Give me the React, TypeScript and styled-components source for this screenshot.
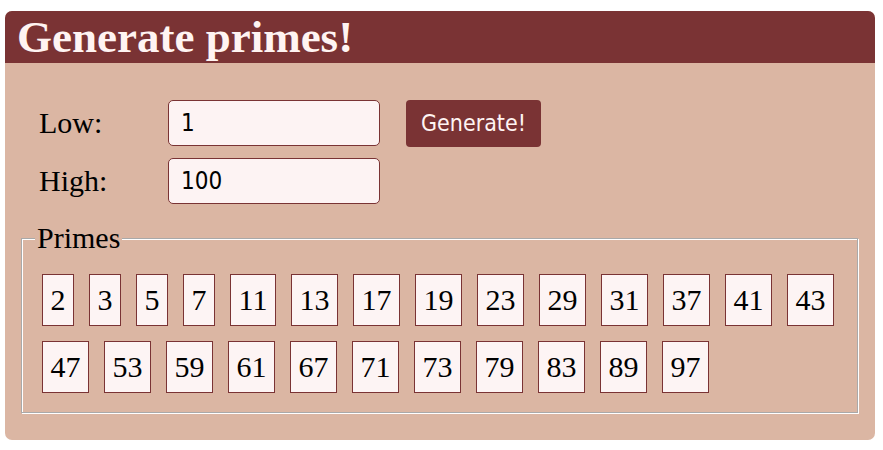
import React, { useState } from "react";
import styled, { createGlobalStyle } from "styled-components";

const GlobalStyle = createGlobalStyle`
  html, body {
    margin: 0;
    padding: 0;
    background: #ffffff;
  }
  body {
    font-family: "Liberation Serif", "Times New Roman", serif;
  }
`;

const Card = styled.div`
  box-sizing: border-box;
  width: 870px;
  margin: 11px 0 0 5px;
  background: #dbb6a3;
  border-radius: 7px;
  overflow: hidden;
  padding-bottom: 27px;
`;

const Title = styled.h1`
  margin: 0;
  padding: 0 12px;
  background: #7a3334;
  color: #fff4f2;
  font-family: "Liberation Serif", "Times New Roman", serif;
  font-weight: bold;
  font-size: 45px;
  line-height: 52px;
`;

const Form = styled.div`
  display: flex;
  flex-direction: column;
  gap: 12px;
  padding: 37px 0 0 34px;
`;

const Row = styled.div`
  display: flex;
  align-items: center;
  height: 46px;
`;

const Label = styled.label`
  width: 129px;
  font-size: 30px;
  color: #000;
`;

const sansStack = `"DejaVu Sans Condensed", "Liberation Sans", Arial, sans-serif`;

const Input = styled.input`
  box-sizing: border-box;
  width: 212px;
  height: 46px;
  padding: 0 12px;
  border: 1px solid #7a3334;
  border-radius: 5px;
  background: #fdf3f3;
  font-family: ${sansStack};
  font-stretch: condensed;
  font-size: 24px;
  color: #000;
  outline: none;
`;

const Button = styled.button`
  box-sizing: border-box;
  width: 135px;
  height: 47px;
  margin-left: 26px;
  padding: 0;
  border: none;
  border-radius: 4px;
  background: #7a3334;
  color: #fff4f2;
  font-family: ${sansStack};
  font-stretch: condensed;
  font-size: 23px;
  cursor: pointer;
`;

const Fieldset = styled.fieldset`
  margin: 17px 17px 0 16px;
  padding: 19px 13px 19px 14px;
  border: 1px solid #a9a9a9;
  box-shadow: inset 1px 1px 0 #ffffff, 1px 1px 0 #ffffff;
`;

const Legend = styled.legend`
  padding: 0 2px;
  margin-left: -1px;
  background: #dbb6a3;
  font-size: 30px;
  line-height: 34px;
  color: #000;
`;

const PrimeList = styled.div`
  display: flex;
  flex-wrap: wrap;
  gap: 15px;
  padding-left: 6px;
`;

const Prime = styled.div`
  box-sizing: border-box;
  height: 52px;
  padding: 0 7.5px;
  border: 1px solid #7a3334;
  background: #fdf4f4;
  font-size: 30px;
  line-height: 50px;
  color: #000;
`;

function primesBetween(low: number, high: number): number[] {
  const out: number[] = [];
  for (let n = Math.max(2, low); n <= high; n++) {
    let ok = true;
    for (let d = 2; d * d <= n; d++) {
      if (n % d === 0) {
        ok = false;
        break;
      }
    }
    if (ok) out.push(n);
  }
  return out;
}

export default function App() {
  const [low, setLow] = useState("1");
  const [high, setHigh] = useState("100");
  const [primes, setPrimes] = useState<number[]>(() => primesBetween(1, 100));

  return (
    <>
      <GlobalStyle />
      <Card>
        <Title>Generate primes!</Title>
        <Form>
          <Row>
            <Label htmlFor="low">Low:</Label>
            <Input id="low" value={low} onChange={(e) => setLow(e.target.value)} />
            <Button
              onClick={() => setPrimes(primesBetween(Number(low) || 0, Number(high) || 0))}
            >
              Generate!
            </Button>
          </Row>
          <Row>
            <Label htmlFor="high">High:</Label>
            <Input id="high" value={high} onChange={(e) => setHigh(e.target.value)} />
          </Row>
        </Form>
        <Fieldset>
          <Legend>Primes</Legend>
          <PrimeList>
            {primes.map((p) => (
              <Prime key={p}>{p}</Prime>
            ))}
          </PrimeList>
        </Fieldset>
      </Card>
    </>
  );
}
